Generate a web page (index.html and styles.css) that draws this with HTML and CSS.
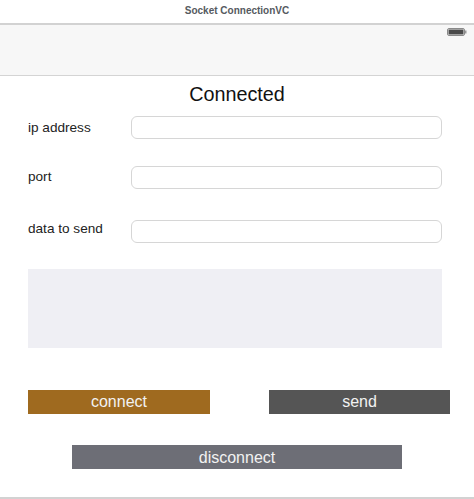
FILE: index.html
```html
<!DOCTYPE html>
<html lang="en">
<head>
<meta charset="UTF-8">
<title>Socket ConnectionVC</title>
<link rel="stylesheet" href="styles.css">
</head>
<body>

<div class="title-bar">Socket ConnectionVC</div>

<div class="status-bar">
    <svg class="battery" width="20" height="8" viewBox="0 0 20 8">
        <rect x="0.5" y="0.5" width="17" height="7" rx="1.5" fill="#f7f7f7" stroke="#8a8a8a"/>
        <rect x="1.5" y="1.5" width="15" height="5" fill="#4a4a4a"/>
        <rect x="18" y="2.5" width="1.5" height="3" fill="#999"/>
    </svg>
</div>

<div class="content">
    <h1 class="status">Connected</h1>

    <!-- Form rows -->
    <div class="row row-ip">
        <label>ip address</label>
        <input type="text">
    </div>
    <div class="row row-port">
        <label>port</label>
        <input type="text">
    </div>
    <div class="row row-data">
        <label>data to send</label>
        <input type="text">
    </div>

    <div class="output"></div>

    <!-- Buttons -->
    <div class="buttons">
        <button class="btn-connect">connect</button>
        <button class="btn-send">send</button>
    </div>
    <button class="btn-disconnect">disconnect</button>
</div>

</body>
</html>
```

FILE: styles.css
```css
* {
    box-sizing: border-box;
    margin: 0;
    padding: 0;
    font-family: 'Liberation Sans', Arial, sans-serif;
}

body {
    width: 474px;
    height: 499px;
    overflow: hidden;
    background: #ffffff;
    display: flex;
    flex-direction: column;
}

.title-bar {
    height: 25px;
    padding-bottom: 2px;
    display: flex;
    align-items: center;
    justify-content: center;
    font-size: 10px;
    font-weight: bold;
    color: #555a60;
    border-bottom: 2px solid #d2d2d2;
}

.status-bar {
    height: 51px;
    padding: 3px 7px 0 0;
    display: flex;
    justify-content: flex-end;
    align-items: flex-start;
    background: #f7f7f7;
    border-bottom: 1px solid #d4d4d4;
}

.content {
    flex: 1;
    padding: 0 24px 0 28px;
    border-bottom: 2px solid #d2d2d2;
}

.status {
    height: 40px;
    padding-bottom: 3px;
    margin-left: -28px;
    margin-right: -24px;
    display: flex;
    align-items: center;
    justify-content: center;
    font-size: 19.8px;
    font-weight: normal;
    color: #111;
}

/* Form rows */
.row {
    display: flex;
    align-items: flex-start;
}

.row-port {
    margin-top: 27px;
}

.row-data {
    margin-top: 31px;
}

.row label {
    width: 103px;
    padding-top: 4px;
    font-size: 13.6px;
    color: #222;
}

.row-port label {
    padding-top: 3px;
}

.row-data label {
    padding-top: 1px;
}

.row input {
    width: 311px;
    height: 23px;
    background: #fff;
    border: 1px solid #d6d6d6;
    border-radius: 6px;
}

.output {
    width: 414px;
    height: 79px;
    margin-top: 26px;
    background: #efeff4;
}

/* Buttons */
button {
    display: block;
    height: 24px;
    border: none;
    font-size: 16px;
    color: #f2f2f2;
}

.buttons {
    display: flex;
    justify-content: space-between;
    margin-top: 42px;
}

.btn-connect {
    width: 182px;
    background: #9f6a1f;
}

.btn-send {
    width: 181px;
    background: #555555;
}

.btn-disconnect {
    width: 330px;
    margin: 31px 0 0 44px;
    padding-top: 1px;
    background: #6d6e76;
}
```
